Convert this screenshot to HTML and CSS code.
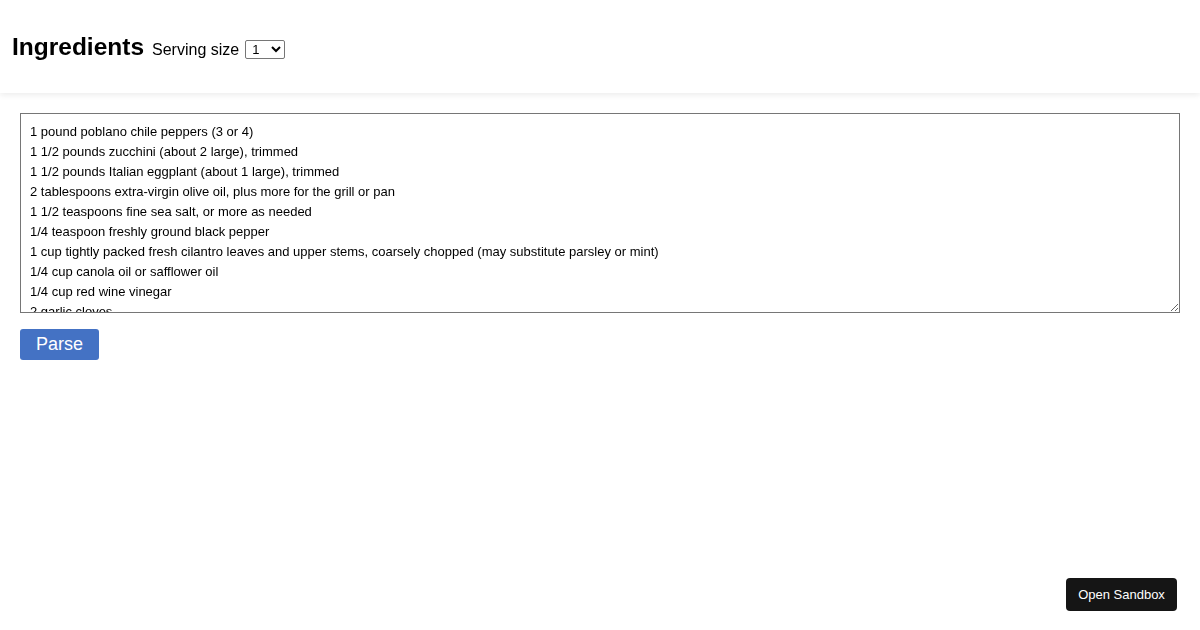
FILE: index.html
```html
<!DOCTYPE html>
<html>
<head>
<meta charset="utf-8">
<link rel="stylesheet" href="styles.css">
</head>
<body>
<header class="header">
  <h1 class="title">Ingredients</h1>
  <label class="serving">Serving size
    <select class="select"><option>1</option><option>2</option></select>
  </label>
</header>
<main class="main">
<textarea class="input">1 pound poblano chile peppers (3 or 4)
1 1/2 pounds zucchini (about 2 large), trimmed
1 1/2 pounds Italian eggplant (about 1 large), trimmed
2 tablespoons extra-virgin olive oil, plus more for the grill or pan
1 1/2 teaspoons fine sea salt, or more as needed
1/4 teaspoon freshly ground black pepper
1 cup tightly packed fresh cilantro leaves and upper stems, coarsely chopped (may substitute parsley or mint)
1/4 cup canola oil or safflower oil
1/4 cup red wine vinegar
2 garlic cloves
1 teaspoon ground cumin</textarea>
<button class="parse">Parse</button>
</main>
<button class="sandbox">Open Sandbox</button>
</body>
</html>
```

FILE: styles.css
```css
html, body {
  margin: 0;
  padding: 0;
  background: #fff;
  font-family: "Liberation Sans", Arial, sans-serif;
  color: #000;
}
.header {
  height: 93px;
  display: flex;
  align-items: center;
  padding: 6px 12px 0;
  box-shadow: 0 2px 6px rgba(0,0,0,0.08);
  box-sizing: border-box;
}
.title {
  margin: 0;
  font-size: 24.5px;
  font-weight: bold;
  line-height: 1;
  position: relative;
  top: -2px;
}
.serving {
  font-size: 16px;
  margin-left: 8px;
  display: flex;
  align-items: center;
}
.select {
  margin-left: 6px;
  font-family: "Liberation Sans", Arial, sans-serif;
  font-size: 13px;
  width: 40px;
  height: 19px;
  border: 1px solid #767676;
  border-radius: 2px;
  background: #fff;
  padding: 0 2px;
}
.main {
  padding: 20px 20px 0;
}
.input {
  display: block;
  box-sizing: border-box;
  width: 100%;
  height: 200px;
  font-family: "Liberation Sans", Arial, sans-serif;
  font-size: 13px;
  line-height: 20px;
  padding: 8px 9px;
  border: 1px solid #767676;
  border-radius: 0;
  resize: vertical;
  color: #000;
}
.parse {
  margin-top: 16px;
  width: 79px;
  height: 31px;
  background: #4472c4;
  color: #fff;
  border: none;
  border-radius: 3px;
  font-family: "Liberation Sans", Arial, sans-serif;
  font-size: 18px;
  padding: 0;
}
.sandbox {
  position: fixed;
  right: 23px;
  bottom: 19px;
  width: 111px;
  height: 33px;
  background: #151515;
  color: #fff;
  border: none;
  border-radius: 4px;
  font-family: "Liberation Sans", Arial, sans-serif;
  font-size: 13px;
  padding: 0;
}
```
